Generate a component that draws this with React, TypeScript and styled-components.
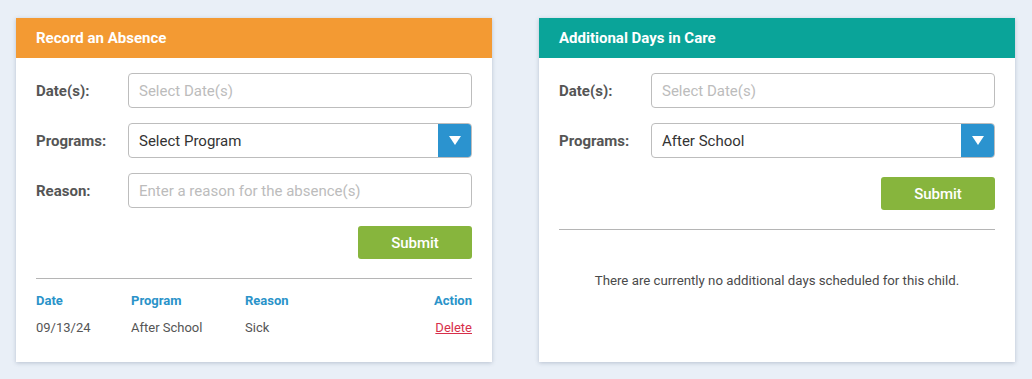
import React from "react";
import styled, { createGlobalStyle } from "styled-components";

const Global = createGlobalStyle`
  html, body { margin: 0; padding: 0; }
  body {
    background: #e9eff7;
    font-family: Roboto, "Liberation Sans", Arial, sans-serif;
    -webkit-font-smoothing: antialiased;
  }
  * { box-sizing: border-box; }
`;

const Page = styled.div`
  display: flex;
  gap: 47px;
  padding: 18px 17px 17px 16px;
  height: 379px;
`;

const Card = styled.section`
  width: 476px;
  height: 344px;
  background: #fff;
  box-shadow: 0 1px 4px rgba(60, 80, 110, 0.28);
  display: flex;
  flex-direction: column;
`;

const CardHeader = styled.header<{ $color: string }>`
  height: 40px;
  background: ${(p) => p.$color};
  color: #fff;
  font-weight: 700;
  font-size: 15px;
  display: flex;
  align-items: center;
  padding: 0 20px;
`;

const CardBody = styled.div`
  padding: 15px 20px 0;
  display: flex;
  flex-direction: column;
`;

const FormRow = styled.div`
  display: grid;
  grid-template-columns: 92px 1fr;
  align-items: center;
  margin-bottom: 15px;
`;

const Label = styled.label`
  font-size: 15px;
  font-weight: 700;
  color: #555;
`;

const TextInput = styled.input`
  height: 35px;
  width: 100%;
  border: 1px solid #bdbdbd;
  border-radius: 4px;
  padding: 0 10px;
  font-family: inherit;
  font-size: 15px;
  color: #333;
  outline: none;
  &::placeholder { color: #bcbcbc; }
`;

const SelectBox = styled.div`
  height: 35px;
  border: 1px solid #bdbdbd;
  border-radius: 4px;
  display: flex;
  align-items: stretch;
  overflow: hidden;
`;

const SelectValue = styled.span`
  flex: 1;
  display: flex;
  align-items: center;
  padding: 0 10px;
  font-size: 15px;
  color: #333;
`;

const SelectArrow = styled.span`
  width: 33px;
  background: #2b93cf;
  display: flex;
  align-items: center;
  justify-content: center;
`;

const Actions = styled.div<{ $mt: number }>`
  display: flex;
  justify-content: flex-end;
  margin-top: ${(p) => p.$mt}px;
`;

const SubmitButton = styled.button`
  width: 114px;
  height: 33px;
  background: #87b53d;
  border: none;
  border-radius: 3px;
  color: #fff;
  font-family: inherit;
  font-size: 15px;
  font-weight: 500;
`;

const Divider = styled.hr`
  border: none;
  border-top: 1px solid #b5b5b5;
  margin: 19px 0 0;
  width: 100%;
`;

const Table = styled.div`
  display: grid;
  grid-template-columns: 95px 114px 1fr auto;
  row-gap: 12px;
  margin-top: 14px;
  font-size: 13px;
`;

const Th = styled.div<{ $right?: boolean }>`
  color: #2a93c9;
  font-weight: 700;
  text-align: ${(p) => (p.$right ? "right" : "left")};
`;

const Td = styled.div`
  color: #555;
`;

const DeleteLink = styled.a`
  color: #d72f4a;
  text-decoration: underline;
  text-align: right;
  cursor: pointer;
`;

const EmptyText = styled.p`
  margin: 43px 0 0;
  text-align: center;
  font-size: 13.25px;
  color: #4a4a4a;
`;

const Caret = () => (
  <svg width="12" height="9" viewBox="0 0 12 9">
    <path d="M0 0 H12 L6 9 Z" fill="#fff" />
  </svg>
);

export default function App() {
  return (
    <>
      <Global />
      <Page>
        <Card>
          <CardHeader $color="#f39a33">Record an Absence</CardHeader>
          <CardBody>
            <FormRow>
              <Label>Date(s):</Label>
              <TextInput placeholder="Select Date(s)" />
            </FormRow>
            <FormRow>
              <Label>Programs:</Label>
              <SelectBox>
                <SelectValue>Select Program</SelectValue>
                <SelectArrow><Caret /></SelectArrow>
              </SelectBox>
            </FormRow>
            <FormRow>
              <Label>Reason:</Label>
              <TextInput placeholder="Enter a reason for the absence(s)" />
            </FormRow>
            <Actions $mt={3}>
              <SubmitButton>Submit</SubmitButton>
            </Actions>
            <Divider />
            <Table>
              <Th>Date</Th>
              <Th>Program</Th>
              <Th>Reason</Th>
              <Th $right>Action</Th>
              <Td>09/13/24</Td>
              <Td>After School</Td>
              <Td>Sick</Td>
              <DeleteLink>Delete</DeleteLink>
            </Table>
          </CardBody>
        </Card>
        <Card>
          <CardHeader $color="#0aa499">Additional Days in Care</CardHeader>
          <CardBody>
            <FormRow>
              <Label>Date(s):</Label>
              <TextInput placeholder="Select Date(s)" />
            </FormRow>
            <FormRow>
              <Label>Programs:</Label>
              <SelectBox>
                <SelectValue>After School</SelectValue>
                <SelectArrow><Caret /></SelectArrow>
              </SelectBox>
            </FormRow>
            <Actions $mt={4}>
              <SubmitButton>Submit</SubmitButton>
            </Actions>
            <Divider />
            <EmptyText>There are currently no additional days scheduled for this child.</EmptyText>
          </CardBody>
        </Card>
      </Page>
    </>
  );
}
